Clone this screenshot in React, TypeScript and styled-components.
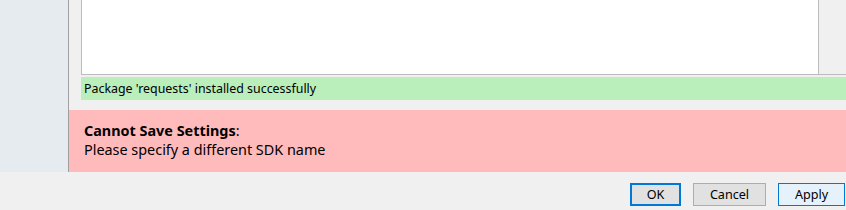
import React from 'react';
import styled, { createGlobalStyle } from 'styled-components';

const GlobalStyle = createGlobalStyle`
    html, body {
        margin: 0;
        padding: 0;
        background: #f0f0f0;
    }
    body {
        font-family: "Noto Sans", "Segoe UI", sans-serif;
        color: #000;
    }
`;

const Window = styled.div`
    width: 846px;
    height: 210px;
    display: flex;
    flex-direction: column;
    overflow: hidden;
    background: #f0f0f0;
`;

const Main = styled.div`
    display: flex;
    flex-direction: row;
    height: 172px;
`;

const Sidebar = styled.div`
    width: 68px;
    flex-shrink: 0;
    background: #e6ebf0;
    border-right: 1px solid #a0a0a0;
`;

const Content = styled.div`
    flex: 1;
    display: flex;
    flex-direction: column;
    min-width: 0;
`;

const ListArea = styled.div`
    margin-left: 12px;
    height: 74px;
    border-bottom: 1px solid #bcbcbc;
    display: flex;
`;

const ListBox = styled.div`
    width: 736px;
    background: #fff;
    border-left: 1px solid #bcbcbc;
    border-right: 1px solid #bcbcbc;
`;

const StatusBar = styled.div`
    margin: 2px 0 0 12px;
    height: 23px;
    background: #baeeba;
    font-size: 12.4px;
    line-height: 23px;
    padding-left: 3px;
    white-space: nowrap;
`;

const ErrorPanel = styled.div`
    margin-top: 10px;
    flex: 1;
    background: #ffbbbb;
    padding: 11px 15px 0;
    font-size: 14.4px;
    line-height: 19px;
`;

const ErrorTitle = styled.div`
    b {
        font-weight: 700;
    }
`;

const ButtonBar = styled.div`
    flex: 1;
    display: flex;
    justify-content: flex-end;
    align-items: flex-start;
    gap: 12px;
    padding: 11px 1px 0 0;
`;

type ButtonProps = {
    $w: number;
    $variant?: 'focus' | 'default' | 'hover';
};

const Button = styled.button<ButtonProps>`
    box-sizing: border-box;
    width: ${p => p.$w}px;
    height: 23px;
    margin: 0;
    padding: 0;
    font-family: "Noto Sans", "Segoe UI", sans-serif;
    font-size: 12.6px;
    color: #000;
    background: ${p => (p.$variant === 'hover' ? '#e5f1fb' : '#e1e1e1')};
    border: ${p =>
        p.$variant === 'focus'
            ? '2px solid #0078d7'
            : p.$variant === 'hover'
            ? '1px solid #0078d7'
            : '1px solid #adadad'};
`;

const App: React.FC = () => {
    return (
        <Window>
            <GlobalStyle />
            <Main>
                <Sidebar />
                <Content>
                    <ListArea>
                        <ListBox />
                    </ListArea>
                    <StatusBar>Package 'requests' installed successfully</StatusBar>
                    <ErrorPanel>
                        <ErrorTitle>
                            <b>Cannot Save Settings</b>:
                        </ErrorTitle>
                        <div>Please specify a different SDK name</div>
                    </ErrorPanel>
                </Content>
            </Main>
            <ButtonBar>
                <Button $w={51} $variant="focus">OK</Button>
                <Button $w={73}>Cancel</Button>
                <Button $w={67} $variant="hover">Apply</Button>
            </ButtonBar>
        </Window>
    );
};

export default App;
